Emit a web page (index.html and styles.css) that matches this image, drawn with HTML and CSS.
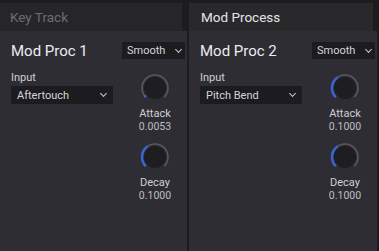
FILE: index.html
```html
<!DOCTYPE html>
<html lang="en">
<head>
    <meta charset="UTF-8">
    <meta name="viewport" content="width=device-width, initial-scale=1.0">
    <title>Mod Process</title>
    <link rel="stylesheet" href="styles.css">
</head>
<body>
    <div class="tabs">
        <div class="tab">Key Track</div>
        <div class="tab active">Mod Process</div>
    </div>

    <div class="panels">
        <div class="panel">
            <div class="panel-head">
                <h2>Mod Proc 1</h2>
                <div class="select small">Smooth <span class="chev"></span></div>
            </div>
            <div class="panel-body">
                <div class="input-col">
                    <div class="label">Input</div>
                    <div class="select wide">Aftertouch <span class="chev"></span></div>
                </div>
                <div class="knobs">
                    <div class="knob">
                        <svg width="30" height="30" viewBox="0 0 30 30">
                            <circle cx="15" cy="15" r="11" class="knob-face"/>
                            <path d="M5.81 24.19 A13 13 0 1 1 24.19 24.19" class="knob-track"/>
                            <path d="M5.81 24.19 A13 13 0 0 1 4.3 22.4" class="knob-value"/>
                        </svg>
                        <div class="knob-name">Attack</div>
                        <div class="knob-val">0.0053</div>
                    </div>
                    <div class="knob">
                        <svg width="30" height="30" viewBox="0 0 30 30">
                            <circle cx="15" cy="15" r="11" class="knob-face"/>
                            <path d="M5.81 24.19 A13 13 0 1 1 24.19 24.19" class="knob-track"/>
                            <path d="M5.81 24.19 A13 13 0 0 1 7.6 4.3" class="knob-value"/>
                        </svg>
                        <div class="knob-name">Decay</div>
                        <div class="knob-val">0.1000</div>
                    </div>
                </div>
            </div>
        </div>

        <div class="panel">
            <div class="panel-head">
                <h2>Mod Proc 2</h2>
                <div class="select small">Smooth <span class="chev"></span></div>
            </div>
            <div class="panel-body">
                <div class="input-col">
                    <div class="label">Input</div>
                    <div class="select wide">Pitch Bend <span class="chev"></span></div>
                </div>
                <div class="knobs">
                    <div class="knob">
                        <svg width="30" height="30" viewBox="0 0 30 30">
                            <circle cx="15" cy="15" r="11" class="knob-face"/>
                            <path d="M5.81 24.19 A13 13 0 1 1 24.19 24.19" class="knob-track"/>
                            <path d="M5.81 24.19 A13 13 0 0 1 7.6 4.3" class="knob-value"/>
                        </svg>
                        <div class="knob-name">Attack</div>
                        <div class="knob-val">0.1000</div>
                    </div>
                    <div class="knob">
                        <svg width="30" height="30" viewBox="0 0 30 30">
                            <circle cx="15" cy="15" r="11" class="knob-face"/>
                            <path d="M5.81 24.19 A13 13 0 1 1 24.19 24.19" class="knob-track"/>
                            <path d="M5.81 24.19 A13 13 0 0 1 7.6 4.3" class="knob-value"/>
                        </svg>
                        <div class="knob-name">Decay</div>
                        <div class="knob-val">0.1000</div>
                    </div>
                </div>
            </div>
        </div>
    </div>
</body>
</html>
```

FILE: styles.css
```css
body {
    margin: 0;
    height: 251px;
    overflow: hidden;
    background: #1c1c1f;
    font-family: Roboto, "Open Sans", sans-serif;
    color: #d8d8dc;
    padding-top: 3px;
    box-sizing: border-box;
}
.tabs {
    display: grid;
    grid-template-columns: 182px 184px;
    column-gap: 7px;
    height: 28px;
}
.tab {
    background: #262629;
    color: #6d6d72;
    font-size: 13.5px;
    line-height: 28px;
    padding-left: 10px;
}
.tab.active {
    background: #29292c;
    color: #e4e4e8;
    padding-left: 12px;
}
.panels {
    display: grid;
    grid-template-columns: 187px 188px;
    column-gap: 2px;
    height: 220px;
}
.panel {
    background: #2e2d33;
    padding: 10px 2px 0 11px;
}
.panel-head {
    display: flex;
    justify-content: space-between;
    align-items: center;
    height: 19px;
}
h2 {
    margin: 0;
    font-size: 15px;
    font-weight: 400;
    color: #ececf0;
}
.select {
    background: #1c1c20;
    color: #d4d4d8;
    font-size: 11px;
    display: flex;
    align-items: center;
    justify-content: space-between;
    box-sizing: border-box;
}
.select.small {
    width: 63px;
    height: 17px;
    padding: 0 4px 0 5px;
}
.select.wide {
    width: 102px;
    height: 18px;
    padding: 0 7px 0 6px;
}
.chev {
    width: 4px;
    height: 4px;
    border-right: 1px solid #c8c8cc;
    border-bottom: 1px solid #c8c8cc;
    transform: rotate(45deg);
    margin-top: -3px;
}
.panel-body {
    display: flex;
    justify-content: space-between;
    margin-top: 11px;
}
.label {
    font-size: 11px;
    color: #cfcfd4;
    margin-bottom: 2px;
}
.knobs {
    display: flex;
    flex-direction: column;
    gap: 9px;
    width: 60px;
    margin-top: 2px;
}
.knob {
    display: flex;
    flex-direction: column;
    align-items: center;
    font-size: 11px;
    line-height: 13px;
    color: #cfcfd4;
}
.knob svg {
    margin-bottom: 4px;
}
.knob-val {
    color: #bfbfc4;
    font-size: 10.5px;
}
.knob-face {
    fill: #1e1e22;
}
.knob-track {
    fill: none;
    stroke: #58585e;
    stroke-width: 1.6;
}
.knob-value {
    fill: none;
    stroke: #3a64d6;
    stroke-width: 2.4;
}
```
